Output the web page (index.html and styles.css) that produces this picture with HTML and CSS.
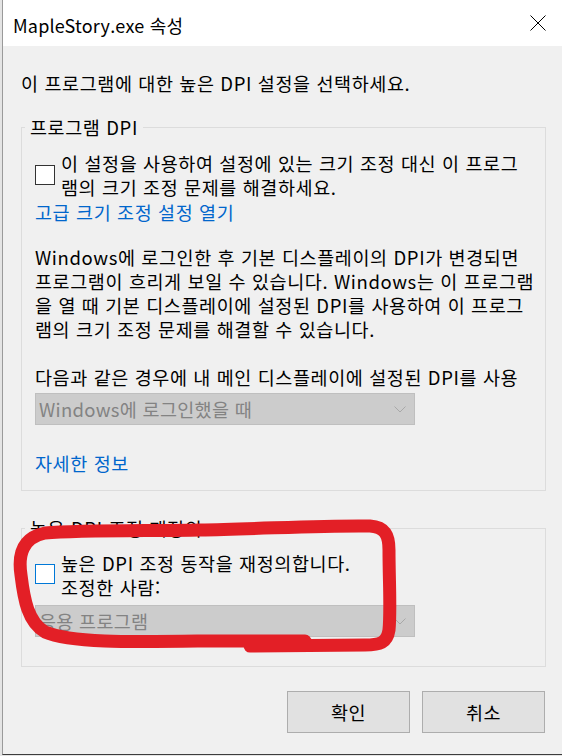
FILE: index.html
```html
<!DOCTYPE html>
<html lang="ko">
<head>
<meta charset="utf-8">
<title>MapleStory.exe 속성</title>
<link rel="stylesheet" href="styles.css">
</head>
<body>
<div class="window">
  <div class="titlebar">
    <span class="title">MapleStory.exe 속성</span>
    <svg class="close" width="16" height="16" viewBox="0 0 16 16"><path d="M0.5 0.5 L15.5 15.5 M15.5 0.5 L0.5 15.5" stroke="#000" stroke-width="1" fill="none"/></svg>
  </div>
  <div class="content">
    <p class="intro">이 프로그램에 대한 높은 DPI 설정을 선택하세요.</p>
    <fieldset class="group group-dpi">
      <legend>프로그램 DPI</legend>
      <div class="check">
        <span class="box"></span>
        <span class="check-text">이 설정을 사용하여 설정에 있는 크기 조정 대신 이 프로그<br>램의 크기 조정 문제를 해결하세요.</span>
      </div>
      <a class="link link-adv">고급 크기 조정 설정 열기</a>
      <p class="para">Windows에 로그인한 후 기본 디스플레이의 DPI가 변경되면<br>프로그램이 흐리게 보일 수 있습니다. Windows는 이 프로그램<br>을 열 때 기본 디스플레이에 설정된 DPI를 사용하여 이 프로그<br>램의 크기 조정 문제를 해결할 수 있습니다.</p>
      <p class="label">다음과 같은 경우에 내 메인 디스플레이에 설정된 DPI를 사용</p>
      <div class="select">
        <span>Windows에 로그인했을 때</span>
        <svg class="chev" width="12" height="7" viewBox="0 0 12 7"><path d="M0.5 0.5 L6 6 L11.5 0.5" stroke="#a8a8a8" stroke-width="1" fill="none"/></svg>
      </div>
      <a class="link link-more">자세한 정보</a>
    </fieldset>
    <fieldset class="group group-override">
      <legend>높은 DPI 조정 재정의</legend>
      <div class="check">
        <span class="box box-focus"></span>
        <span class="check-text">높은 DPI 조정 동작을 재정의합니다.<br>조정한 사람:</span>
      </div>
      <div class="select select-2">
        <span>응용 프로그램</span>
        <svg class="chev" width="12" height="7" viewBox="0 0 12 7"><path d="M0.5 0.5 L6 6 L11.5 0.5" stroke="#a8a8a8" stroke-width="1" fill="none"/></svg>
      </div>
    </fieldset>
    <div class="buttons">
      <button class="btn">확인</button>
      <button class="btn">취소</button>
    </div>
  </div>
</div>
<svg class="annotation" width="562" height="756" viewBox="0 0 562 756">
  <path d="M305 641 L200 641 C130 642 70 643 45 632 C28 622 24 600 21 575 C18 555 22 538 45 533 C80 530 150 531 200 530 C260 529 330 525 370 526 C385 527 389 535 389 550 C389 580 391 610 389 630 C387 643 380 645 365 645 L250 646" stroke="#e31f26" stroke-width="13" fill="none" stroke-linecap="round" stroke-linejoin="round"/>
</svg>
</body>
</html>
```
FILE: styles.css
```css
html {
  background: #e4e4e4;
}
body {
  margin: 0;
  position: relative;
  font-family: "Noto Sans CJK KR", "Noto Sans", sans-serif;
  font-size: 18.5px;
  letter-spacing: 0.6px;
  color: #000;
}
.window {
  margin-left: 2px;
  width: 560px;
  height: 755px;
  box-sizing: border-box;
  border-left: 1px solid #9a9a9a;
  border-bottom: 1px solid #3c3c3c;
  background: #f0f0f0;
  display: flex;
  flex-direction: column;
}
.titlebar {
  height: 46px;
  flex: none;
  background: #fff;
  display: flex;
  align-items: center;
  justify-content: space-between;
  padding: 0 16px 0 10px;
}
.title {
  font-size: 18px;
  letter-spacing: 0.2px;
  line-height: 24px;
  padding-top: 3px;
}
.close {
  display: block;
}
.content {
  padding: 0 16px 0 18px;
}
.intro {
  margin: 25px 0 0;
  line-height: 24px;
}
.group {
  margin: 20px 0 0;
  border: 1px solid #dcdcdc;
  padding: 12px 10px 15px 13px;
  min-width: 0;
}
.group legend {
  margin-left: -10px;
  padding: 0 5px;
  line-height: 24px;
}
.check {
  display: flex;
  align-items: center;
  gap: 6px;
}
.box {
  width: 20px;
  height: 20px;
  box-sizing: border-box;
  border: 1px solid #333;
  background: #fff;
  flex: none;
}
.box-focus {
  border-color: #0078d7;
  margin-bottom: 2px;
}
.check-text {
  line-height: 24px;
  white-space: nowrap;
}
.link {
  display: block;
  color: #0066cc;
  line-height: 24px;
}
.link-adv {
  margin-top: 1px;
}
.para {
  margin: 21px 0 0;
  line-height: 24px;
  white-space: nowrap;
}
.label {
  margin: 24px 0 0;
  line-height: 24px;
  white-space: nowrap;
}
.select {
  margin-top: 4px;
  width: 380px;
  height: 32px;
  box-sizing: border-box;
  background: #cccccc;
  border: 1px solid #bfbfbf;
  color: #838383;
  display: flex;
  align-items: center;
  justify-content: space-between;
  padding: 0 8px 0 3px;
  letter-spacing: 0.3px;
}
.chev {
  display: block;
}
.link-more {
  margin-top: 26px;
}
.group-override {
  margin-top: 25px;
  padding-top: 11px;
  padding-bottom: 29px;
}
.select-2 {
  margin-top: 6px;
}
.buttons {
  margin-top: 24px;
  display: flex;
  justify-content: flex-end;
  gap: 12px;
  padding-right: 1px;
}
.btn {
  width: 123px;
  height: 42px;
  box-sizing: border-box;
  background: #e1e1e1;
  border: 1px solid #adadad;
  font-family: inherit;
  font-size: 18.5px;
  letter-spacing: 0.6px;
  color: #000;
  padding: 0;
}
.annotation {
  position: absolute;
  top: 0;
  left: 0;
  pointer-events: none;
}
```
